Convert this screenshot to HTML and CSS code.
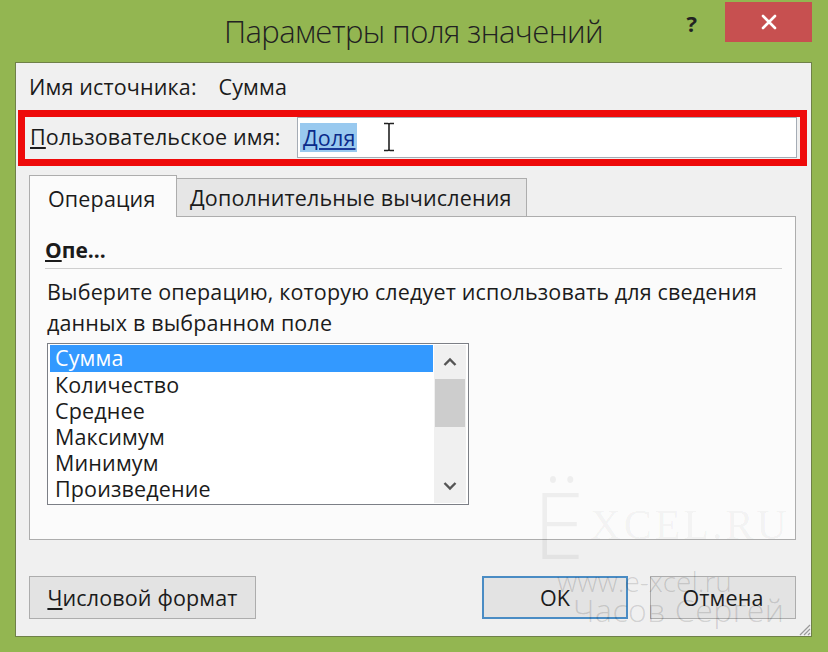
FILE: index.html
```html
<!DOCTYPE html>
<html lang="ru">
  <head>
    <meta charset="UTF-8" />
    <meta name="viewport" content="width=device-width, initial-scale=1.0" />
    <title>Параметры поля значений</title>
    <link rel="stylesheet" href="styles.css">
  </head>
  <body>
    <div class="window">
      <header class="titlebar">
        <span></span>
        <h1 class="title">Параметры поля значений</h1>
        <div class="controls">
          <span class="help">?</span>
          <button class="close" type="button" aria-label="Закрыть">
            <svg width="16" height="16" viewBox="0 0 16 16">
              <path d="M2 2 L14 14 M14 2 L2 14" stroke="#fff" stroke-width="2.6" stroke-linecap="round" />
            </svg>
          </button>
        </div>
      </header>

      <main class="dialog">
        <div class="source-row">
          <span class="source-label">Имя источника:</span>
          <span class="source-value">Сумма</span>
        </div>

        <div class="name-row">
          <label class="name-label" for="custom-name"><u>П</u>ользовательское имя:</label>
          <div class="name-input" id="custom-name">
            <span class="selected-text">Доля</span>
            <!-- mouse text cursor -->
            <svg class="ibeam" width="14" height="30" viewBox="0 0 14 30">
              <path d="M2 1.5 H6 Q7 1.5 7 3 V27 Q7 28.5 6 28.5 H2 M12 1.5 H8 Q7 1.5 7 3 M7 27 Q7 28.5 8 28.5 H12" fill="none" stroke="#222" stroke-width="1.6" />
            </svg>
          </div>
        </div>

        <div class="tabs">
          <span class="tab active">Операция</span>
          <span class="tab">Дополнительные вычисления</span>
        </div>

        <section class="panel">
          <h2 class="panel-heading"><u>О</u>пе...</h2>
          <p class="panel-text">Выберите операцию, которую следует использовать для сведения данных в выбранном поле</p>

          <div class="listbox">
            <ul class="list-items">
              <li class="list-item selected">Сумма</li>
              <li class="list-item">Количество</li>
              <li class="list-item">Среднее</li>
              <li class="list-item">Максимум</li>
              <li class="list-item">Минимум</li>
              <li class="list-item">Произведение</li>
            </ul>
            <div class="scrollbar">
              <span class="scroll-btn">
                <svg width="14" height="10" viewBox="0 0 14 10"><path d="M1.5 8 L7 2.5 L12.5 8" fill="none" stroke="#555" stroke-width="2.4" /></svg>
              </span>
              <span class="scroll-thumb"></span>
              <span class="scroll-track"></span>
              <span class="scroll-btn">
                <svg width="14" height="10" viewBox="0 0 14 10"><path d="M1.5 2 L7 7.5 L12.5 2" fill="none" stroke="#555" stroke-width="2.4" /></svg>
              </span>
            </div>
          </div>
        </section>

        <div class="buttons">
          <button class="btn" type="button"><u>Ч</u>исловой формат</button>
          <button class="btn btn-default" type="button">OK</button>
          <button class="btn" type="button">Отмена</button>
        </div>

        <!-- site watermark over the dialog -->
        <div class="watermark">
          <div class="wm-logo"><span class="wm-big">Ё</span><span class="wm-rest">XCEL.RU</span></div>
          <div class="wm-site">www.e-xcel.ru</div>
          <div class="wm-author">Часов Сергей</div>
        </div>

        <svg class="grip" width="13" height="13" viewBox="0 0 13 13">
          <path d="M12 2 L2 12 M12 6 L6 12 M12 10 L10 12" stroke="#9a9a9a" stroke-width="1.2" />
        </svg>
      </main>
    </div>
  </body>
</html>
```

FILE: styles.css
```css
body {
  margin: 0;
  padding: 0;
  background-color: #93b651;
  font-family: "Open Sans", "Noto Sans", sans-serif;
  color: #1b1b1b;
}

.window {
  width: 828px;
  height: 652px;
  box-sizing: border-box;
  padding: 0 16px 15px 15px;
  display: flex;
  flex-direction: column;
}

.titlebar {
  height: 62px;
  flex: none;
  display: grid;
  grid-template-columns: 1fr auto 1fr;
  align-items: start;
  margin: 0 -16px 0 -15px;
  padding: 0 16px 0 15px;
}

.title {
  margin: 10px 0 0 0;
  font-size: 31px;
  font-weight: 300;
  letter-spacing: -0.6px;
  line-height: 42px;
  color: #222;
  white-space: nowrap;
}

.controls {
  justify-self: end;
  display: flex;
  align-items: flex-start;
}

.help {
  margin: 8px 28px 0 0;
  font-size: 22px;
  font-weight: 700;
  color: #222;
}

.close {
  width: 87px;
  height: 40px;
  margin-top: 2px;
  padding: 0;
  border: none;
  background-color: #c75050;
  display: flex;
  align-items: center;
  justify-content: center;
}

.dialog {
  position: relative;
  flex: 1;
  background-color: #f0f0f0;
  border: 1px solid #6f8048;
  padding: 10px 15px 17px 13px;
  display: flex;
  flex-direction: column;
  overflow: hidden;
  font-size: 21.5px;
  letter-spacing: 0.15px;
}

.source-row {
  line-height: 28px;
  height: 28px;
}

.source-value {
  margin-left: 16px;
}

.name-row {
  margin: 9px -11px 0 -11px;
  height: 56px;
  box-sizing: border-box;
  border: 7px solid #ee0a0a;
  display: flex;
  align-items: stretch;
  padding: 0 3px 1px 5px;
}

.name-label {
  line-height: 40px;
  width: 267px;
}

.name-input {
  position: relative;
  flex: 1;
  background-color: #fff;
  border: 1px solid #a5acb5;
  display: flex;
  align-items: center;
  padding-left: 2px;
}

.selected-text {
  background-color: #99c9ef;
  color: #0a2a8a;
  line-height: 29px;
  padding: 0 2px 0 3px;
  text-decoration: underline;
  text-decoration-color: #1a3a9a;
}

.ibeam {
  position: absolute;
  left: 84px;
  top: 4px;
}

.tabs {
  margin-top: 9px;
  height: 41px;
  display: flex;
  align-items: flex-end;
  position: relative;
  z-index: 1;
}

.tab {
  box-sizing: border-box;
  height: 38px;
  width: 350px;
  padding: 0 0 0 13px;
  line-height: 38px;
  background-color: #e6e6e6;
  border: 1px solid #adadad;
  border-bottom: none;
  border-left: none;
  white-space: nowrap;
}

.tab.active {
  height: 42px;
  margin-bottom: -1px;
  width: 148px;
  padding: 0 0 0 18px;
  line-height: 46px;
  background-color: #fbfbfb;
  border-left: 1px solid #adadad;
}

.panel {
  height: 324px;
  box-sizing: border-box;
  background-color: #fbfbfb;
  border: 1px solid #adadad;
  padding: 19px 13px 0 15px;
}

.panel-heading {
  margin: 0;
  font-size: 21px;
  font-weight: 700;
  letter-spacing: 0;
  line-height: 28px;
  padding-bottom: 4px;
  border-bottom: 1px solid #cfcfcf;
}

.panel-text {
  margin: 7px 0 0 2px;
  line-height: 31px;
  width: 725px;
}

.listbox {
  margin: 5px 0 0 2px;
  width: 422px;
  height: 162px;
  box-sizing: border-box;
  background-color: #fff;
  border: 1px solid #7c7f86;
  display: flex;
  padding: 1px 2px 1px 2px;
}

.list-items {
  list-style: none;
  margin: 0;
  padding: 0;
  flex: 1;
}

.list-item {
  line-height: 26px;
  height: 26px;
  padding-left: 5px;
}

.list-item.selected {
  background-color: #3399ff;
  color: #fff;
  height: 27px;
}

.scrollbar {
  width: 32px;
  margin-left: 1px;
  background-color: #f0f0f0;
  display: flex;
  flex-direction: column;
}

.scroll-btn {
  height: 34px;
  display: flex;
  align-items: center;
  justify-content: center;
}

.scroll-thumb {
  height: 48px;
  margin: 0 1px;
  background-color: #cdcdcd;
}

.scroll-track {
  flex: 1;
}

.buttons {
  margin-top: 36px;
  display: flex;
  gap: 22px;
}

.btn {
  height: 43px;
  width: 146px;
  box-sizing: border-box;
  background-color: #e3e3e3;
  border: 1px solid #adadad;
  font-family: "Open Sans", "Noto Sans", sans-serif;
  font-size: 21.5px;
  letter-spacing: 0.15px;
  color: #1b1b1b;
  padding: 0;
}

.btn:first-child {
  width: 227px;
  margin-right: auto;
}

.btn-default {
  border: 2px solid #4a8cc4;
}

.watermark {
  position: absolute;
  left: 517px;
  top: 414px;
  pointer-events: none;
  letter-spacing: 0;
}

.wm-logo {
  height: 93px;
  white-space: nowrap;
  color: rgba(0, 0, 0, 0.05);
}

.wm-big {
  font-size: 93px;
  font-weight: 300;
  line-height: 93px;
}

.wm-rest {
  font-family: "Liberation Serif", serif;
  font-size: 42px;
  letter-spacing: 3px;
  vertical-align: 20px;
  margin-left: 6px;
}

.wm-site,
.wm-author {
  font-weight: 300;
  color: rgba(0, 0, 0, 0.14);
  white-space: nowrap;
}

.wm-site {
  margin: -3px 0 0 24px;
  font-size: 28px;
  line-height: 28px;
}

.wm-author {
  margin-left: 40px;
  font-size: 32px;
  letter-spacing: 0.5px;
  line-height: 30px;
}

.grip {
  position: absolute;
  right: 0;
  bottom: 0;
}
```
